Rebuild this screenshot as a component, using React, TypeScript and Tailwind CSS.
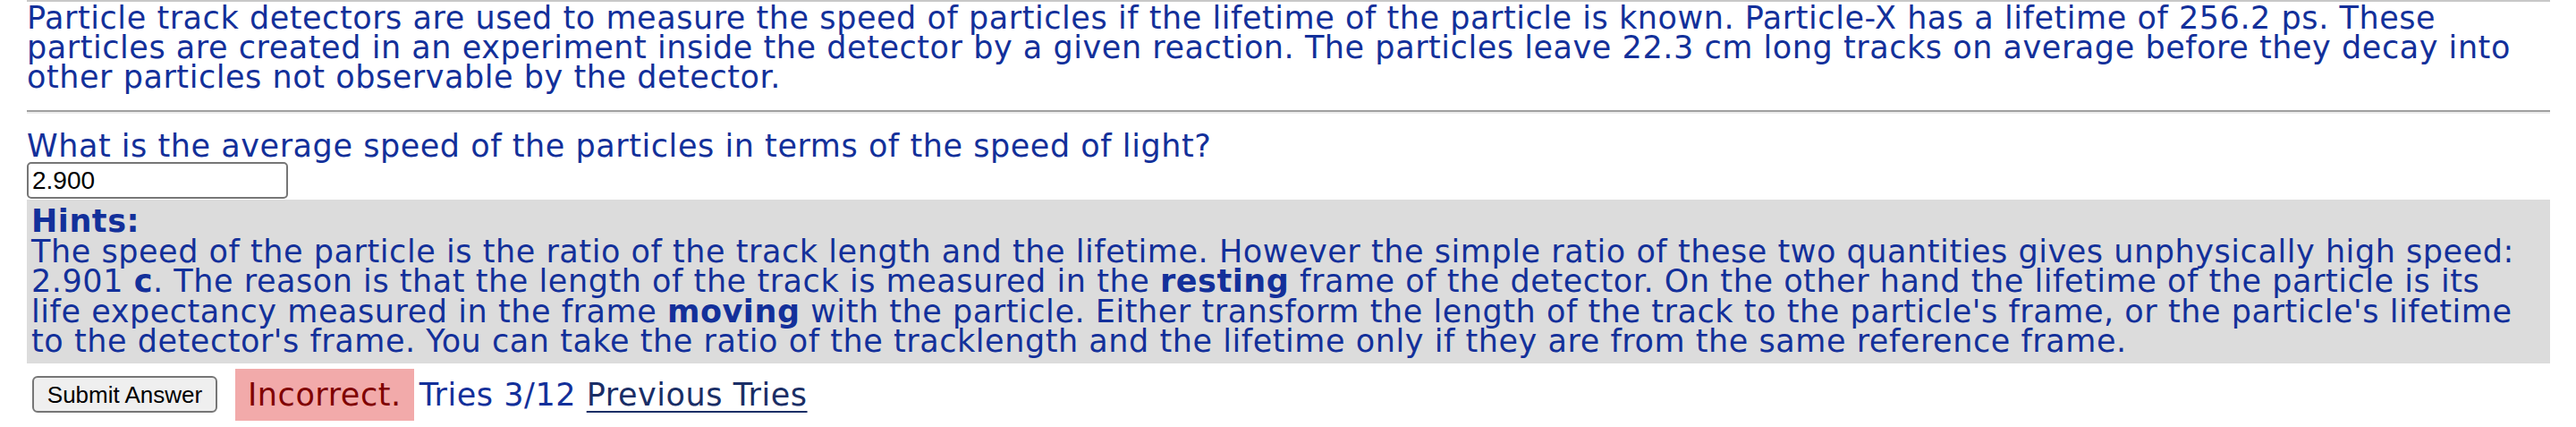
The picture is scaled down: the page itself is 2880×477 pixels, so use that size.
export default function App() {
  return (
    <div className="min-h-[477px] w-[2880px] bg-white pl-[30px] pr-[29px] font-['DejaVu_Sans',Verdana,sans-serif] tracking-[0.55px] text-[#13309a]">
      <div className="h-[2px] bg-[#c8c8c8]" />

      <p className="mt-[2px] whitespace-nowrap text-[35px] leading-[33px]">
        Particle track detectors are used to measure the speed of particles if the lifetime of the particle is known. Particle-X has a lifetime of 256.2 ps. These
        <br />
        particles are created in an experiment inside the detector by a given reaction. The particles leave 22.3 cm long tracks on average before they decay into
        <br />
        other particles not observable by the detector.
      </p>

      <div className="mt-[20px] h-[4px] border-t-2 border-b-2 border-t-[#a0a0a0] border-b-[#ececec]" />

      <p className="mt-[20px] text-[35px] leading-[33px]">What is the average speed of the particles in terms of the speed of light?</p>

      <input
        readOnly
        value="2.900"
        className="mt-[1px] block h-[41px] w-[292px] rounded-[5px] border-2 border-[#767676] bg-white pl-[4px] font-['Liberation_Sans',Arial,sans-serif] text-[28px] tracking-normal text-black outline-none"
      />

      <div className="mt-[1px] whitespace-nowrap bg-[#dcdcdc] pb-[7px] pl-[5px] pt-[8px] text-[35px] leading-[33.5px]">
        <div className="font-bold">Hints:</div>
        The speed of the particle is the ratio of the track length and the lifetime. However the simple ratio of these two quantities gives unphysically high speed:
        <br />
        2.901 <b>c</b>. The reason is that the length of the track is measured in the <b>resting</b> frame of the detector. On the other hand the lifetime of the particle is its
        <br />
        life expectancy measured in the frame <b>moving</b> with the particle. Either transform the length of the track to the particle's frame, or the particle's lifetime
        <br />
        to the detector's frame. You can take the ratio of the tracklength and the lifetime only if they are from the same reference frame.
      </div>

      <div className="mt-[6px] flex items-center">
        <button className="ml-[6px] h-[41px] w-[207px] rounded-[6px] border-2 border-[#767676] bg-[#efefef] font-['Liberation_Sans',Arial,sans-serif] text-[26px] tracking-normal text-black">
          Submit Answer
        </button>
        <span className="ml-[20px] bg-[#f2aaaa] px-[14px] py-[12px] text-[35px] leading-[34px] text-[#800000]">Incorrect.</span>
        <span className="ml-[6px] whitespace-nowrap text-[35px] leading-[34px]">
          Tries 3/12 <a className="text-[#1a2e66] underline decoration-2 underline-offset-[6px]">Previous Tries</a>
        </span>
      </div>
    </div>
  );
}
